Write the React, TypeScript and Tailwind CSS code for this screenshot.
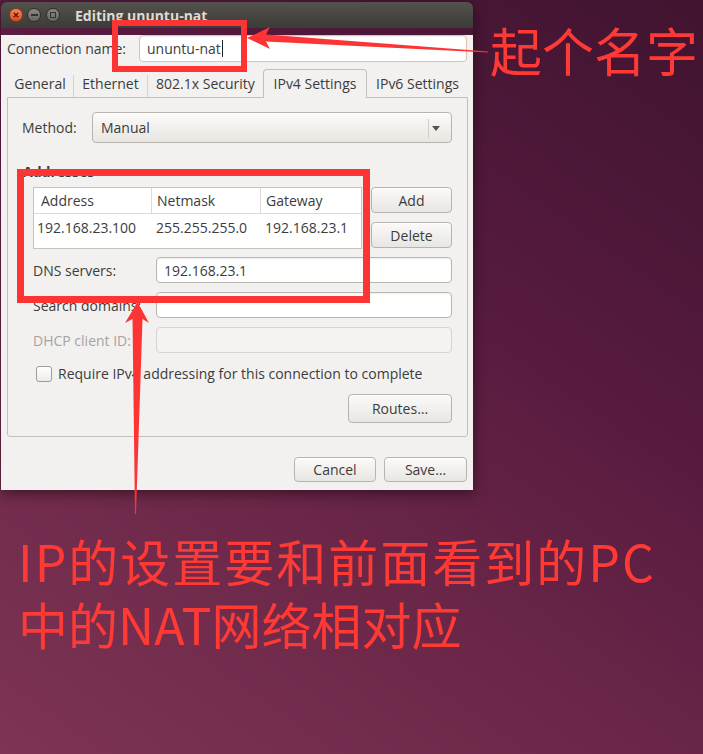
import type { ReactNode } from 'react';

const ui = "font-['Open_Sans',sans-serif]";
const cjk = "font-['Noto_Sans_CJK_SC',sans-serif]";

function Button({ children, className = '' }: { children: ReactNode; className?: string }) {
  return (
    <div
      className={`flex items-center justify-center rounded-[4px] border border-[#b7b4ae] bg-gradient-to-b from-[#fbfaf9] to-[#e8e6e2] text-[14px] text-[#3c3c3c] shadow-[inset_0_1px_0_#ffffff] ${className}`}
    >
      {children}
    </div>
  );
}

function Entry({ children, disabled = false, className = '' }: { children?: ReactNode; disabled?: boolean; className?: string }) {
  return (
    <div
      className={`flex items-center rounded-[4px] border px-[7px] text-[14px] ${
        disabled
          ? 'border-[#d6d4cf] bg-[#f4f3f1]'
          : 'border-[#bab7b1] bg-white shadow-[inset_0_1px_2px_rgba(0,0,0,0.07)]'
      } ${className}`}
    >
      {children}
    </div>
  );
}

function FormRow({ label, value, disabled, className = '' }: { label: string; value?: string; disabled?: boolean; className?: string }) {
  return (
    <div className={`flex h-[26px] items-center pl-[11px] ${className}`}>
      <span className={`w-[123px] ${disabled ? 'text-[#a6a39e]' : ''}`}>{label}</span>
      <Entry disabled={disabled} className="h-[26px] w-[296px]">
        {value}
      </Entry>
    </div>
  );
}

export default function App() {
  return (
    <div className="relative h-[754px] w-full overflow-hidden bg-[linear-gradient(35deg,#7e3454_0%,#6b2748_35%,#561a3f_65%,#40142f_100%)]">
      {/* dialog window */}
      <div className={`ml-[1px] mt-[2px] w-[472px] overflow-hidden rounded-t-[6px] shadow-[0_3px_14px_rgba(20,0,10,0.55)] ${ui} text-[14px] text-[#3c3c3c]`}>
        <div className="flex h-[26px] items-center bg-gradient-to-b from-[#53524d] to-[#3c3b37] pl-[8px]">
          <div className="flex h-[14px] w-[14px] items-center justify-center rounded-full border border-[#8e3a1c] bg-gradient-to-b from-[#f58758] to-[#df4a16]">
            <svg width="6" height="6" viewBox="0 0 6 6">
              <path d="M0.8 0.8L5.2 5.2M5.2 0.8L0.8 5.2" stroke="#4a1a0a" strokeWidth="1.3" />
            </svg>
          </div>
          <div className="ml-[4px] flex h-[14px] w-[14px] items-center justify-center rounded-full border border-[#2f2e2b] bg-gradient-to-b from-[#8a8984] to-[#67665f]">
            <div className="h-[1.5px] w-[7px] bg-[#34332f]" />
          </div>
          <div className="ml-[5px] flex h-[14px] w-[14px] items-center justify-center rounded-full border border-[#2f2e2b] bg-gradient-to-b from-[#8a8984] to-[#67665f]">
            <div className="h-[6px] w-[6px] border-[1.3px] border-[#34332f]" />
          </div>
          <span className="ml-[15px] text-[14px] font-bold text-[#dfdbd2]">Editing ununtu-nat</span>
        </div>

        <div className="bg-[#f2f1f0] pb-[8px]">
          <div className="mt-[7px] flex h-[27px] items-center px-[6px]">
            <span className="w-[132px]">Connection name:</span>
            <Entry className="h-[27px] flex-1 border-[#e2bfae]">
              ununtu-nat
              <span className="ml-px h-[17px] w-px bg-[#222]" />
            </Entry>
          </div>

          {/* notebook tabs */}
          <div className="relative z-10 ml-[6px] mt-[7px] flex h-[28px] w-[461px] items-end">
            <div className="flex h-[28px] w-[66px] items-center justify-center">General</div>
            <div className="h-[22px] w-px bg-[#d5d3ce]" />
            <div className="flex h-[28px] w-[73px] items-center justify-center">Ethernet</div>
            <div className="h-[22px] w-px bg-[#d5d3ce]" />
            <div className="flex h-[28px] w-[115px] items-center justify-center">802.1x Security</div>
            <div className="-mb-px flex h-[29px] w-[104px] items-center justify-center rounded-t-[4px] border border-b-0 border-[#c3c0bb] bg-[#f2f1f0] pb-px">
              IPv4 Settings
            </div>
            <div className="flex h-[28px] w-[101px] items-center justify-center">IPv6 Settings</div>
          </div>

          <div className="ml-[6px] box-border h-[340px] w-[461px] rounded-b-[3px] border border-[#c3c0bb] pl-[14px] pr-[15px] pt-[14px]">
            <div className="flex h-[31px] items-center">
              <span className="w-[70px]">Method:</span>
              <Button className="relative h-[31px] flex-1 !justify-start pl-[8px]">
                Manual
                <div className="absolute right-[22px] top-[6px] h-[19px] w-px bg-[#d0cdc8]" />
                <svg className="absolute right-[11px] top-[13px]" width="8" height="5" viewBox="0 0 8 5">
                  <path d="M0 0H8L4 5Z" fill="#55534f" />
                </svg>
              </Button>
            </div>

            <div className="mt-[21px] h-[16px] pl-[1px] font-bold leading-[16px]">Addresses</div>

            <div className="mt-[7px] flex pl-[11px]">
              <div className="h-[62px] w-[329px] border border-[#c7c4bf] bg-white">
                <div className="flex h-[26px] border-b border-[#dcdad6]">
                  <div className="flex w-[118px] items-center border-r border-[#dcdad6] pl-[7px]">Address</div>
                  <div className="flex w-[109px] items-center border-r border-[#dcdad6] pl-[5px]">Netmask</div>
                  <div className="flex flex-1 items-center pl-[5px]">Gateway</div>
                </div>
                <div className="flex h-[26px] items-center">
                  <span className="w-[118px] pl-[3px]">192.168.23.100</span>
                  <span className="w-[109px] pl-[4px]">255.255.255.0</span>
                  <span className="pl-[4px]">192.168.23.1</span>
                </div>
              </div>
              <div className="ml-[9px] flex flex-col gap-[9px]">
                <Button className="h-[26px] w-[81px]">Add</Button>
                <Button className="h-[26px] w-[81px]">Delete</Button>
              </div>
            </div>

            <FormRow label="DNS servers:" value="192.168.23.1" className="mt-[8px]" />
            <FormRow label="Search domains:" className="mt-[9px]" />
            <FormRow label="DHCP client ID:" disabled className="mt-[9px]" />

            <div className="mt-[13px] flex h-[16px] items-center pl-[14px]">
              <div className="h-[16px] w-[16px] rounded-[3px] border border-[#a09d97] bg-gradient-to-b from-white to-[#ecebe8]" />
              <span className="ml-[6px] leading-[16px]">Require IPv4 addressing for this connection to complete</span>
            </div>

            <div className="mt-[12px] flex justify-end">
              <Button className="h-[29px] w-[104px]">Routes…</Button>
            </div>
          </div>

          <div className="mt-[20px] flex justify-end gap-[8px] pr-[6px]">
            <Button className="h-[25px] w-[82px]">Cancel</Button>
            <Button className="h-[25px] w-[83px]">Save…</Button>
          </div>
        </div>
      </div>

      {/* note under the dialog */}
      <div className={`mt-[39px] pl-[18px] text-[50px] leading-[63px] text-[#ff3a35] ${cjk}`}>
        <p className="tracking-[2px]">IP的设置要和前面看到的PC</p>
        <p>中的NAT网络相对应</p>
      </div>

      {/* markup drawn over the screenshot */}
      <div className="absolute left-[112px] top-[20px] h-[52px] w-[135px] border-[6px] border-[#fd3434]" />
      <div className="absolute left-[17px] top-[169px] h-[134px] w-[353px] border-[7px] border-[#fd3434]" />
      <svg className="pointer-events-none absolute inset-0" width="703" height="754" viewBox="0 0 703 754">
        <polygon points="247,38 270,27 266,34.5 488,51.5 488,52.5 266,41.5 270,49" fill="#fd3434" />
        <polygon points="137.5,302 149,323 142.5,319 136,514 135,514 132.5,319 125,323" fill="#fd3434" />
      </svg>
      <div className={`absolute left-[490px] top-[24px] text-[52px] leading-[52px] text-[#ff3a35] ${cjk}`}>起个名字</div>
    </div>
  );
}
